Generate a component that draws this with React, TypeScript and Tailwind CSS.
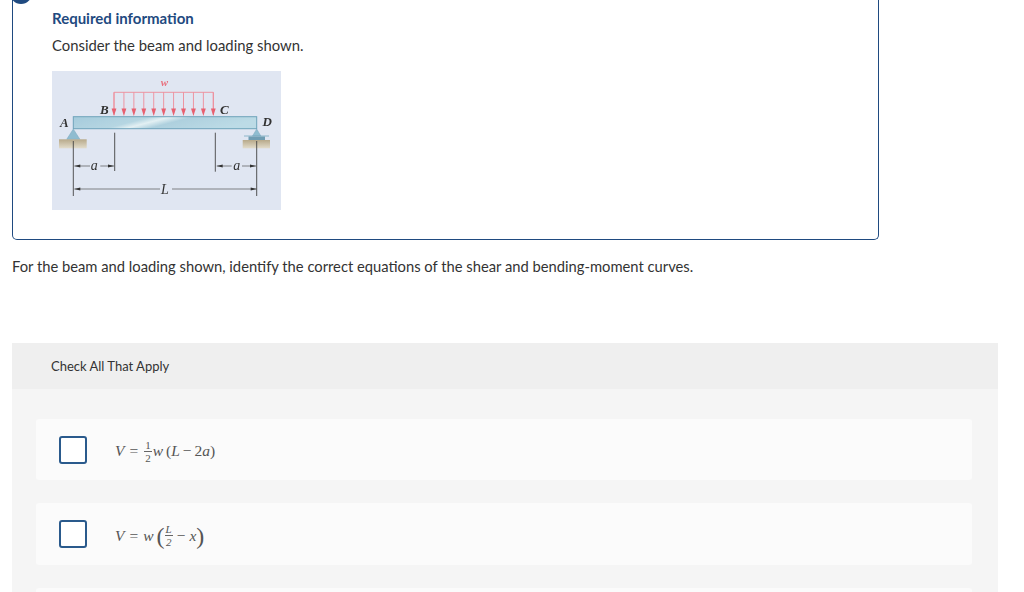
import React from 'react';

const sans = "font-['Lato',sans-serif]";

function Dim({ x1, x2, y }: { x1: number; x2: number; y: number }) {
  const dir = x2 > x1 ? 1 : -1;
  return (
    <g>
      <line x1={x1} y1={y} x2={x2} y2={y} stroke="#555" strokeWidth="0.7" />
      <polygon points={`${x1},${y} ${x1 + dir * 6},${y - 1.6} ${x1 + dir * 6},${y + 1.6}`} fill="#333" />
    </g>
  );
}

function BeamFigure() {
  const arrows = Array.from({ length: 11 }, (_, i) => 62 + i * 9.93);
  return (
    <svg width="229" height="139" viewBox="0 0 229 139" className="block">
      <defs>
        <linearGradient id="beam" x1="0" y1="0" x2="1" y2="0.25">
          <stop offset="0" stopColor="#a5cbdc" />
          <stop offset="0.4" stopColor="#b6d6e2" />
          <stop offset="0.5" stopColor="#e3f0f3" />
          <stop offset="0.62" stopColor="#aed0de" />
          <stop offset="1" stopColor="#bcdbe6" />
        </linearGradient>
        <linearGradient id="ground" x1="0" y1="0" x2="0" y2="1">
          <stop offset="0" stopColor="#b7a98a" />
          <stop offset="1" stopColor="#e2dccb" />
        </linearGradient>
        <filter id="soft">
          <feGaussianBlur stdDeviation="0.4" />
        </filter>
      </defs>
      <rect width="229" height="139" fill="#e0e6f2" />
      <g filter="url(#soft)">
        {/* distributed load */}
        <polyline points="62,44 62,21.3 161.3,21.3 161.3,44" fill="none" stroke="#ee8c98" strokeWidth="0.9" />
        {arrows.map((x) => (
          <g key={x}>
            <line x1={x} y1="21.3" x2={x} y2="42" stroke="#ee8c98" strokeWidth="0.9" />
            <polygon points={`${x - 2.4},37.5 ${x + 2.4},37.5 ${x},45`} fill="#e8606f" />
          </g>
        ))}

        {/* beam */}
        <rect x="21.3" y="45.7" width="183.4" height="12" fill="url(#beam)" stroke="#6fa3bb" strokeWidth="1" />

        {/* left support */}
        <polygon points="21.3,58 14.7,68.3 27.9,68.3" fill="#8fbcd0" stroke="#7aa9bf" strokeWidth="0.5" />
        <rect x="7" y="68.3" width="27.7" height="9" fill="url(#ground)" />

        {/* right support */}
        <polygon points="204.7,58 200.5,65 208.9,65" fill="#8fbcd0" stroke="#7aa9bf" strokeWidth="0.5" />
        <line x1="192" y1="65" x2="217" y2="65" stroke="#7aa9bf" strokeWidth="0.8" />
        <rect x="196.5" y="65.5" width="16.5" height="3.5" fill="#6f9db3" />
        <rect x="190.7" y="69" width="27.3" height="8.3" fill="url(#ground)" />

        {/* dimension lines */}
        <line x1="21.3" y1="70" x2="21.3" y2="125" stroke="#444" strokeWidth="0.9" />
        <line x1="62.7" y1="61.7" x2="62.7" y2="100" stroke="#444" strokeWidth="0.9" />
        <line x1="163.3" y1="61.7" x2="163.3" y2="100.7" stroke="#444" strokeWidth="0.9" />
        <line x1="204.7" y1="70" x2="204.7" y2="125" stroke="#444" strokeWidth="0.9" />
        <Dim x1={22.3} x2={38} y={95} />
        <Dim x1={62} x2={48.3} y={95} />
        <Dim x1={164.7} x2={179.7} y={95} />
        <Dim x1={204} x2={190} y={95} />
        <Dim x1={22.3} x2={108} y={118} />
        <Dim x1={204.7} x2={120} y={118} />

        {/* labels */}
        <g fontFamily="'Liberation Serif', serif" fontStyle="italic" fontWeight="700" fontSize="13" fill="#333" textAnchor="middle">
          <text x="52.3" y="42.5">B</text>
          <text x="172.3" y="42.5">C</text>
          <text x="12.3" y="56">A</text>
          <text x="215.3" y="55">D</text>
          <text x="112.3" y="15" fill="#e8707e" fontSize="11">w</text>
          <text x="42.3" y="98.5" fontWeight="400" fontSize="14">a</text>
          <text x="184.7" y="98.5" fontWeight="400" fontSize="14">a</text>
          <text x="113" y="122.5" fontWeight="400" fontSize="14">L</text>
        </g>
      </g>
    </svg>
  );
}

function Frac({ top, bottom, italic }: { top: string; bottom: string; italic?: boolean }) {
  return (
    <span className={`inline-flex flex-col items-center text-[11px] leading-[10px] ${italic ? 'italic' : ''}`}>
      <span className="border-b border-[#666] px-px pb-px">{top}</span>
      <span className="pt-px">{bottom}</span>
    </span>
  );
}

function Option({ children, h }: { children?: React.ReactNode; h: string }) {
  return (
    <div className={`flex items-center rounded-[3px] bg-[#fbfbfb] pl-[23px] ${h}`}>
      <div className="h-[28px] w-[28px] rounded-[3px] border-2 border-[#2a5a8c] bg-white" />
      <div className="ml-[28px] mt-[3px] flex items-center font-['Liberation_Serif',serif] text-[15.5px] text-[#555]">
        {children}
      </div>
    </div>
  );
}

export default function App() {
  return (
    <div className={`relative h-[592px] overflow-hidden bg-white ${sans}`}>
      {/* step badge */}
      <div className="absolute left-[10px] top-[-18px] h-[22px] w-[22px] rounded-full bg-[#1f4a80]" />

      <div className="ml-[12px] h-[240px] w-[867px] rounded-b-[5px] border border-t-0 border-[#1f4a80] pl-[39px] pt-[10px]">
        <p className="text-[15px] leading-[17px] font-bold text-[#1f4a80]">Required information</p>
        <p className="mt-[9px] text-[14.85px] leading-[18px] text-[#333]">Consider the beam and loading shown.</p>
        <div className="mt-[17px]">
          <BeamFigure />
        </div>
      </div>

      <p className="ml-[12px] mt-[16px] text-[14.75px] leading-[20px] text-[#333]">
        For the beam and loading shown, identify the correct equations of the shear and bending-moment curves.
      </p>

      <div className="ml-[12px] mt-[67px] w-[986px] bg-[#f5f5f5]">
        <div className="flex h-[46px] items-center bg-[#efefef] pl-[39px] pt-[2px] text-[13px] text-[#333]">
          Check All That Apply
        </div>
        <div className="flex flex-col gap-[23px] pl-[24px] pr-[26px] pt-[30px]">
          <Option h="h-[61px]">
            <span className="italic">V</span>
            <span className="ml-[5px] mr-[6px]">=</span>
            <Frac top="1" bottom="2" />
            <span className="ml-[1px] italic">w</span>
            <span className="ml-[3px]">(</span>
            <span className="italic">L</span>
            <span className="mx-[3px]">−</span>
            <span>2</span>
            <span className="italic">a</span>
            <span>)</span>
          </Option>
          <Option h="h-[62px]">
            <span className="italic">V</span>
            <span className="ml-[5px] mr-[5px]">=</span>
            <span className="italic">w</span>
            <span className="ml-[3px] text-[24px] font-light leading-none">(</span>
            <Frac top="L" bottom="2" italic />
            <span className="mx-[4px]">−</span>
            <span className="italic">x</span>
            <span className="text-[24px] font-light leading-none">)</span>
          </Option>
          <Option h="h-[62px]" />
        </div>
      </div>
    </div>
  );
}
